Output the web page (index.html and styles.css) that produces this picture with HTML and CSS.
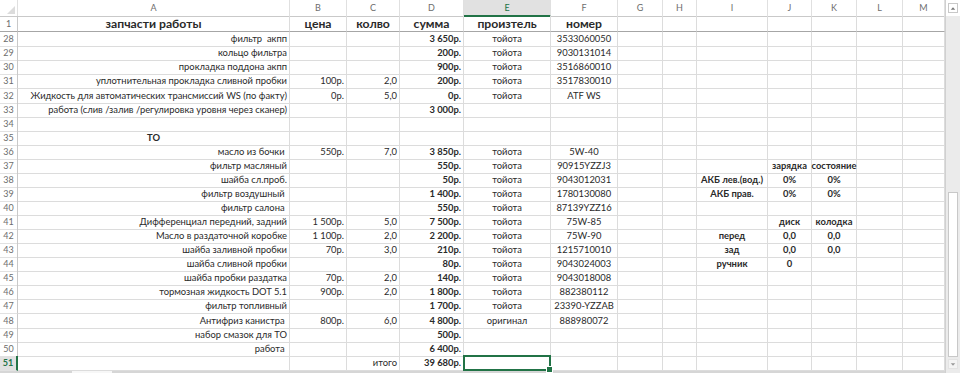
FILE: index.html
```
<!DOCTYPE html>
<html lang="ru">
<head>
<meta charset="utf-8">
<title>Лист</title>
<link rel="stylesheet" href="styles.css">
</head>
<body>
<div class="window">
  <div class="sheet">
    <div class="row hdr">
      <div class="corner"><svg width="8" height="8" viewBox="0 0 8 8"><path d="M8 0 L8 8 L0 8 Z" fill="#dcdcdc"/></svg></div>
      <div>A</div><div>B</div><div>C</div><div>D</div><div class="cur">E</div><div>F</div><div>G</div><div>H</div><div>I</div><div>J</div><div>K</div><div>L</div><div>M</div>
    </div>
    <div class="row r1">
      <div class="rh">1</div>
      <div class="ct">запчасти работы</div><div class="ct">цена</div><div class="ct">колво</div><div class="ct">сумма</div><div class="ct">произтель</div><div class="ct">номер</div><div></div><div></div><div></div><div></div><div></div><div></div><div></div>
    </div>
    <div class="row"><div class="rh">28</div><div class="rt">фильтр  акпп</div><div></div><div></div><div class="rt b">3 650р.</div><div class="ct">тойота</div><div class="ct">3533060050</div><div></div><div></div><div></div><div></div><div></div><div></div><div></div></div>
    <div class="row"><div class="rh">29</div><div class="rt">кольцо фильтра</div><div></div><div></div><div class="rt b">200р.</div><div class="ct">тойота</div><div class="ct">9030131014</div><div></div><div></div><div></div><div></div><div></div><div></div><div></div></div>
    <div class="row"><div class="rh">30</div><div class="rt">прокладка поддона акпп</div><div></div><div></div><div class="rt b">900р.</div><div class="ct">тойота</div><div class="ct">3516860010</div><div></div><div></div><div></div><div></div><div></div><div></div><div></div></div>
    <div class="row"><div class="rh">31</div><div class="rt">уплотнительная прокладка сливной пробки</div><div class="rt">100р.</div><div class="rt">2,0</div><div class="rt b">200р.</div><div class="ct">тойота</div><div class="ct">3517830010</div><div></div><div></div><div></div><div></div><div></div><div></div><div></div></div>
    <div class="row"><div class="rh">32</div><div class="rt">Жидкость для автоматических трансмиссий WS (по факту)</div><div class="rt">0р.</div><div class="rt">5,0</div><div class="rt b">0р.</div><div class="ct">тойота</div><div class="ct">ATF WS</div><div></div><div></div><div></div><div></div><div></div><div></div><div></div></div>
    <div class="row"><div class="rh">33</div><div class="rt">работа (слив /залив /регулировка уровня через сканер)</div><div></div><div></div><div class="rt b">3 000р.</div><div></div><div></div><div></div><div></div><div></div><div></div><div></div><div></div><div></div></div>
    <div class="row"><div class="rh">34</div><div></div><div></div><div></div><div></div><div></div><div></div><div></div><div></div><div></div><div></div><div></div><div></div><div></div></div>
    <div class="row"><div class="rh">35</div><div class="ct b">ТО</div><div></div><div></div><div></div><div></div><div></div><div></div><div></div><div></div><div></div><div></div><div></div><div></div></div>
    <div class="row"><div class="rh">36</div><div class="rt">масло из бочки </div><div class="rt">550р.</div><div class="rt">7,0</div><div class="rt b">3 850р.</div><div class="ct">тойота</div><div class="ct">5W-40</div><div></div><div></div><div></div><div></div><div></div><div></div><div></div></div>
    <div class="row"><div class="rh">37</div><div class="rt">фильтр масляный</div><div></div><div></div><div class="rt b">550р.</div><div class="ct">тойота</div><div class="ct">90915YZZJ3</div><div></div><div></div><div></div><div class="ct b">зарядка</div><div class="ct b ov">состояние</div><div></div><div></div></div>
    <div class="row"><div class="rh">38</div><div class="rt">шайба сл.проб.</div><div></div><div></div><div class="rt b">50р.</div><div class="ct">тойота</div><div class="ct">9043012031</div><div></div><div></div><div class="ct b ov">АКБ лев.(вод.)</div><div class="ct b">0%</div><div class="ct b">0%</div><div></div><div></div></div>
    <div class="row"><div class="rh">39</div><div class="rt">фильтр воздушный </div><div></div><div></div><div class="rt b">1 400р.</div><div class="ct">тойота</div><div class="ct">1780130080</div><div></div><div></div><div class="ct b">АКБ прав.</div><div class="ct b">0%</div><div class="ct b">0%</div><div></div><div></div></div>
    <div class="row"><div class="rh">40</div><div class="rt">фильтр салона </div><div></div><div></div><div class="rt b">550р.</div><div class="ct">тойота</div><div class="ct">87139YZZ16</div><div></div><div></div><div></div><div></div><div></div><div></div><div></div></div>
    <div class="row"><div class="rh">41</div><div class="rt">Дифференциал передний, задний</div><div class="rt">1 500р.</div><div class="rt">5,0</div><div class="rt b">7 500р.</div><div class="ct">тойота</div><div class="ct">75W-85</div><div></div><div></div><div></div><div class="ct b">диск</div><div class="ct b">колодка</div><div></div><div></div></div>
    <div class="row"><div class="rh">42</div><div class="rt">Масло в раздаточной коробке</div><div class="rt">1 100р.</div><div class="rt">2,0</div><div class="rt b">2 200р.</div><div class="ct">тойота</div><div class="ct">75W-90</div><div></div><div></div><div class="ct b">перед</div><div class="ct b">0,0</div><div class="ct b">0,0</div><div></div><div></div></div>
    <div class="row"><div class="rh">43</div><div class="rt">шайба заливной пробки</div><div class="rt">70р.</div><div class="rt">3,0</div><div class="rt b">210р.</div><div class="ct">тойота</div><div class="ct">1215710010</div><div></div><div></div><div class="ct b">зад</div><div class="ct b">0,0</div><div class="ct b">0,0</div><div></div><div></div></div>
    <div class="row"><div class="rh">44</div><div class="rt">шайба сливной пробки</div><div></div><div></div><div class="rt b">80р.</div><div class="ct">тойота</div><div class="ct">9043024003</div><div></div><div></div><div class="ct b">ручник</div><div class="ct b">0</div><div></div><div></div><div></div></div>
    <div class="row"><div class="rh">45</div><div class="rt">шайба пробки раздатка</div><div class="rt">70р.</div><div class="rt">2,0</div><div class="rt b">140р.</div><div class="ct">тойота</div><div class="ct">9043018008</div><div></div><div></div><div></div><div></div><div></div><div></div><div></div></div>
    <div class="row"><div class="rh">46</div><div class="rt">тормозная жидкость DOT 5.1</div><div class="rt">900р.</div><div class="rt">2,0</div><div class="rt b">1 800р.</div><div class="ct">тойота</div><div class="ct">882380112</div><div></div><div></div><div></div><div></div><div></div><div></div><div></div></div>
    <div class="row"><div class="rh">47</div><div class="rt">фильтр топливный</div><div></div><div></div><div class="rt b">1 700р.</div><div class="ct">тойота</div><div class="ct">23390-YZZAB</div><div></div><div></div><div></div><div></div><div></div><div></div><div></div></div>
    <div class="row"><div class="rh">48</div><div class="rt">Антифриз канистра </div><div class="rt">800р.</div><div class="rt">6,0</div><div class="rt b">4 800р.</div><div class="ct">оригинал</div><div class="ct">888980072</div><div></div><div></div><div></div><div></div><div></div><div></div><div></div></div>
    <div class="row"><div class="rh">49</div><div class="rt">набор смазок для ТО</div><div></div><div></div><div class="rt b">500р.</div><div></div><div></div><div></div><div></div><div></div><div></div><div></div><div></div><div></div></div>
    <div class="row"><div class="rh">50</div><div class="rt">работа </div><div></div><div></div><div class="rt b">6 400р.</div><div></div><div></div><div></div><div></div><div></div><div></div><div></div><div></div><div></div></div>
    <div class="row"><div class="rh cur">51</div><div></div><div></div><div class="rt">итого</div><div class="rt b">39 680р.</div><div class="sel"></div><div></div><div></div><div></div><div></div><div></div><div></div><div></div><div></div></div>
    <div class="hscroll"><div class="hthumb"></div></div>
  </div>
  <div class="vscroll">
    <div class="vtop"><div class="arrow"><svg width="9" height="9" viewBox="0 0 9 9"><path d="M2 6 L4.5 3 L7 6 Z" fill="#777"/></svg></div></div>
    <div class="track">
      <div class="thumb"></div>
      <div class="arrow down"><svg width="9" height="9" viewBox="0 0 9 9"><path d="M2 3 L4.5 6 L7 3 Z" fill="#999"/></svg></div>
    </div>
  </div>
</div>
</body>
</html>
```
FILE: styles.css
```
* { box-sizing: border-box; }
html, body { margin: 0; padding: 0; background: #fff; }
body {
  font-family: Lato, "Open Sans", "Liberation Sans", sans-serif;
  color: #2a2a2a;
  width: 960px;
  height: 373px;
  overflow: hidden;
}
.window {
  display: flex;
  width: 960px;
  height: 373px;
}
.sheet {
  width: 945px;
  display: flex;
  flex-direction: column;
}
.row {
  display: grid;
  grid-template-columns: 18px 272px 57px 53px 64px 87px 67px 45px 34px 71px 44px 45px 46px 42px;
  height: 14.07px;
  font-size: 9.4px;
  line-height: 14px;
}
.row > div {
  border-right: 1px solid #dcdcdc;
  border-bottom: 1px solid #dcdcdc;
  padding: 0 2px;
  white-space: pre;
  overflow: visible;
  position: relative;
}
.row.hdr {
  height: 16px;
  font-size: 9px;
  line-height: 15px;
  color: #6d6d6d;
}
.row.hdr > div {
  text-align: center;
  border-bottom: 1px solid #c9c9c9;
  border-right: 1px solid #e0e0e0;
}
.row.hdr > .corner {
  display: flex;
  align-items: flex-end;
  justify-content: flex-end;
  padding: 0 2px 2px 0;
}
.row.hdr > .cur {
  background: #e1e1e1;
  color: #217346;
  border-bottom: 2px solid #217346;
}
.row.r1 {
  height: 16.3px;
  font-size: 12.2px;
  line-height: 15px;
  font-weight: 700;
}
.row.r1 > div { border-bottom: 1px solid #a6a6a6; }
.row.r1 > .rh { font-weight: 400; font-size: 9px; }
.row > .rh {
  text-align: center;
  color: #6d6d6d;
  padding: 0;
  font-size: 9px;
  border-right: 1px solid #c9c9c9;
  border-bottom: 1px solid #e2e2e2;
}
.row > .rh.cur {
  background: #e1e1e1;
  color: #217346;
  font-weight: 700;
  border-right: 2px solid #217346;
}
.ct { text-align: center; }
.rt { text-align: right; }
.b { font-weight: 700; }
.ov { overflow: visible; display: flex; justify-content: center; }
.sel::after {
  content: "";
  position: absolute;
  left: -1px;
  top: -1px;
  right: -1px;
  bottom: -1px;
  border: 2px solid #217346;
}
.sel::before {
  content: "";
  position: absolute;
  right: -3px;
  bottom: -3px;
  width: 5px;
  height: 5px;
  background: #217346;
  border: 1px solid #fff;
  z-index: 2;
}
.hscroll {
  flex: 1;
  background: #d6d6d6;
  padding-left: 72px;
}
.hthumb {
  width: 40px;
  height: 100%;
  background: #f7f7f7;
}
.vscroll {
  width: 15px;
  display: flex;
  flex-direction: column;
  border-left: 1px solid #d0d0d0;
}
.vtop {
  height: 16px;
  background: #fff;
  padding: 3px 0 0 2px;
}
.arrow {
  width: 10px;
  height: 10px;
  border: 1px solid #c8c8c8;
  background: #fff;
  display: flex;
  align-items: center;
  justify-content: center;
}
.track {
  flex: 1;
  background: #ebebeb;
  display: flex;
  flex-direction: column;
  justify-content: flex-end;
  padding: 0 2px 4px 2px;
}
.thumb {
  height: 165px;
  width: 10px;
  background: #fff;
  border: 1px solid #c8c8c8;
  margin-bottom: 2px;
}
.arrow.down {
  border-color: #e3e3e3;
  background: #f4f4f4;
}
```
